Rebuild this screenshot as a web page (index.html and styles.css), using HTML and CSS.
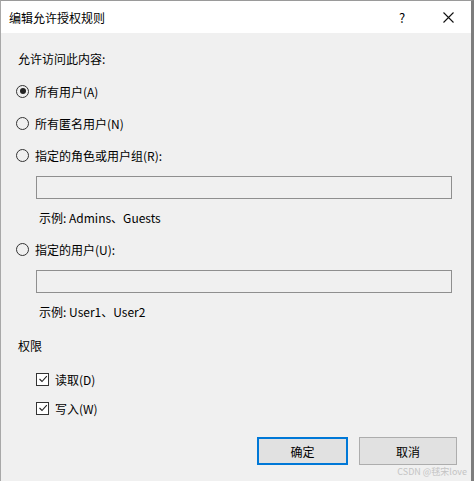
FILE: index.html
```html
<!DOCTYPE html>
<html lang="zh-CN">
<head>
  <meta charset="UTF-8">
  <meta name="viewport" content="width=device-width, initial-scale=1.0">
  <title>编辑允许授权规则</title>
  <link rel="stylesheet" href="styles.css">
</head>
<body>
  <div class="dialog">
    <div class="titlebar">
      <span class="title">编辑允许授权规则</span>
      <span class="help">?</span>
      <span class="close">
        <svg width="11" height="11" viewBox="0 0 11 11"><path d="M0.5 0.5 L10.5 10.5 M10.5 0.5 L0.5 10.5" stroke="#111" stroke-width="1.1" fill="none"/></svg>
      </span>
    </div>

    <div class="content">
      <div class="row">允许访问此内容:</div>

      <div class="row option first">
        <span class="radio checked"></span>所有用户(A)
      </div>
      <div class="row option">
        <span class="radio"></span>所有匿名用户(N)
      </div>
      <div class="row option">
        <span class="radio"></span>指定的角色或用户组(R):
      </div>
      <div class="field"></div>
      <div class="row hint">示例: Admins、Guests</div>

      <div class="row option">
        <span class="radio"></span>指定的用户(U):
      </div>
      <div class="field"></div>
      <div class="row hint">示例: User1、User2</div>

      <div class="row section">权限</div>
      <div class="row check first-check">
        <span class="checkbox">
          <svg width="10" height="10" viewBox="0 0 10 10"><path d="M1.5 5 L4 7.5 L8.8 2.2" stroke="#222" stroke-width="1.1" fill="none"/></svg>
        </span>读取(D)
      </div>
      <div class="row check">
        <span class="checkbox">
          <svg width="10" height="10" viewBox="0 0 10 10"><path d="M1.5 5 L4 7.5 L8.8 2.2" stroke="#222" stroke-width="1.1" fill="none"/></svg>
        </span>写入(W)
      </div>

      <div class="buttons">
        <button class="btn default">确定</button>
        <button class="btn cancel">取消</button>
      </div>
    </div>

    <div class="watermark">CSDN @毬宋love</div>
  </div>
</body>
</html>
```

FILE: styles.css
```css
body {
  margin: 0;
  font-family: "Noto Sans CJK SC", "Noto Sans", sans-serif;
  font-size: 12px;
  color: #000;
  background: #f0f0f0;
}
.dialog {
  position: relative;
  width: 474px;
  height: 481px;
  box-sizing: border-box;
  border-top: 1px solid #9a9a9a;
  border-left: 1px solid #a8a8a8;
  border-right: 3px solid #7d7d7d;
  background: #f0f0f0;
  overflow: hidden;
}
.titlebar {
  height: 32px;
  background: #fff;
  display: flex;
  align-items: center;
  padding-left: 8px;
}
.title {
  flex: 1;
  font-size: 12px;
}
.help {
  width: 10px;
  font-size: 13px;
  margin-right: 34px;
}
.close {
  display: flex;
  margin-right: 17px;
}
.content {
  padding: 15px 17px 0 17px;
  display: flex;
  flex-direction: column;
}
.row {
  height: 20px;
  display: flex;
  align-items: center;
  white-space: nowrap;
}
.option {
  margin-top: 12px;
  margin-left: -2px;
}
.option.first {
  margin-top: 13px;
}
.radio {
  width: 11px;
  height: 11px;
  border: 1px solid #333;
  border-radius: 50%;
  margin-right: 6px;
  display: flex;
  align-items: center;
  justify-content: center;
  background: #f0f0f0;
}
.radio.checked::after {
  content: "";
  width: 6px;
  height: 6px;
  border-radius: 50%;
  background: #222;
}
.field {
  height: 21px;
  margin: 11px 2px 0 18px;
  border: 1px solid #8f8f8f;
  background: #f0f0f0;
}
.hint {
  margin-top: 8px;
  padding-left: 21px;
}
.section {
  margin-top: 14px;
}
.check {
  margin-top: 9px;
  padding-left: 18px;
}
.check.first-check {
  margin-top: 14px;
}
.checkbox {
  width: 11px;
  height: 11px;
  border: 1px solid #333;
  margin-right: 6px;
  display: flex;
  align-items: center;
  justify-content: center;
  background: #fff;
}
.buttons {
  margin-top: 19px;
  margin-right: -3px;
  display: flex;
  justify-content: flex-end;
  gap: 11px;
}
.btn {
  height: 28px;
  font-family: inherit;
  font-size: 12px;
  color: #000;
  background: #e1e1e1;
  border: 1px solid #adadad;
  border-radius: 0;
  padding: 0;
}
.btn.default {
  width: 91px;
  border: 2px solid #0078d7;
}
.btn.cancel {
  width: 98px;
}
.watermark {
  position: absolute;
  right: 4px;
  bottom: 3px;
  font-size: 9px;
  color: #c4c4c4;
}
```
